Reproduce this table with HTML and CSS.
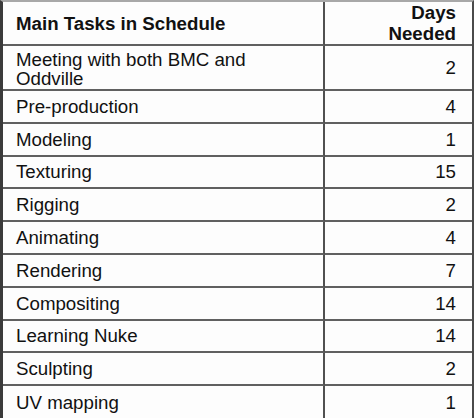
FILE: index.html
```html
<!DOCTYPE html>
<html lang="en">
<head>
<meta charset="utf-8">
<title>Main Tasks in Schedule</title>
<link rel="stylesheet" href="styles.css">
</head>
<body>
<table class="schedule">
  <thead>
    <tr class="row-head">
      <th class="task">Main Tasks in Schedule</th>
      <th class="days">Days<br>Needed</th>
    </tr>
  </thead>
  <tbody>
    <tr class="row-tall"><td class="task">Meeting with both BMC and<br>Oddville</td><td class="days">2</td></tr>
    <tr class="row"><td class="task">Pre-production</td><td class="days">4</td></tr>
    <tr class="row"><td class="task">Modeling</td><td class="days">1</td></tr>
    <tr class="row"><td class="task">Texturing</td><td class="days">15</td></tr>
    <tr class="row"><td class="task">Rigging</td><td class="days">2</td></tr>
    <tr class="row"><td class="task">Animating</td><td class="days">4</td></tr>
    <tr class="row"><td class="task">Rendering</td><td class="days">7</td></tr>
    <tr class="row"><td class="task">Compositing</td><td class="days">14</td></tr>
    <tr class="row"><td class="task">Learning Nuke</td><td class="days">14</td></tr>
    <tr class="row"><td class="task">Sculpting</td><td class="days">2</td></tr>
    <tr class="row-last"><td class="task">UV mapping</td><td class="days">1</td></tr>
  </tbody>
</table>
</body>
</html>
```

FILE: styles.css
```css
html, body {
  margin: 0;
  padding: 0;
  background: #ffffff;
}

.schedule {
  width: 474px;
  border-collapse: separate;
  border-spacing: 0;
  table-layout: fixed;
  font-family: "Liberation Sans", Arial, Helvetica, sans-serif;
  font-size: 18.7px;
  color: #111111;
  background: #fdfdfd;
  border-top: 2px solid #a8a8a8;
  border-left: 3px solid #3a3a3a;
  border-right: 2px solid #4a4a4a;
  border-bottom: 2px solid #404040;
}

.schedule th,
.schedule td {
  padding: 0;
  vertical-align: middle;
  border-bottom: 2px solid #606060;
}

.schedule .task {
  width: 307px;
  text-align: left;
  padding-left: 13px;
  border-right: 2px solid #505050;
}

.schedule .days {
  text-align: right;
  padding-right: 16px;
}

.schedule th {
  font-weight: bold;
  line-height: 21px;
}

.schedule td {
  line-height: 19px;
}

.row-head { height: 42px; }
.row-tall { height: 45px; }
.row-tall .task { padding-top: 2px; }
.row { height: 32.8px; }
.row-last { height: 32px; }
.row-last td { border-bottom: none; }
```
